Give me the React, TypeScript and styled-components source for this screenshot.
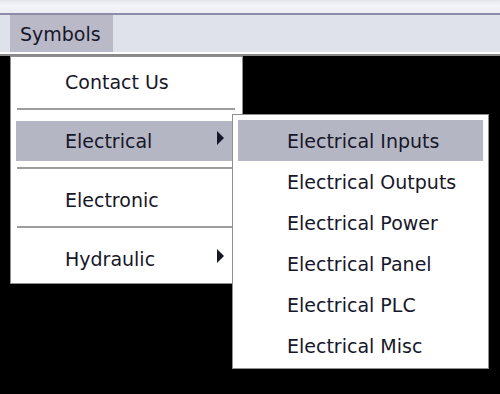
import React from 'react';
import styled, { createGlobalStyle } from 'styled-components';

const colors = {
  black: '#000000',
  white: '#ffffff',
  bar: '#dfe2ea',
  barLine: '#8c8ca6',
  hover: '#b5b6c3',
  border: '#8f8f8f',
  text: '#17172a',
  sep: '#9d9d9d',
};

const GlobalStyle = createGlobalStyle`
  html, body {
    margin: 0;
    padding: 0;
    background: ${colors.black};
  }
  body {
    width: 500px;
    height: 394px;
    overflow: hidden;
    font-family: "DejaVu Sans", "Liberation Sans", sans-serif;
  }
`;

type MenuEntry = { label: string; sub?: boolean; active?: boolean } | 'sep';

const mainItems: MenuEntry[] = [
  { label: 'Contact Us' },
  'sep',
  { label: 'Electrical', sub: true, active: true },
  'sep',
  { label: 'Electronic' },
  'sep',
  { label: 'Hydraulic', sub: true },
];

const subItems = [
  'Electrical Inputs',
  'Electrical Outputs',
  'Electrical Power',
  'Electrical Panel',
  'Electrical PLC',
  'Electrical Misc',
];

export default function App() {
  return (
    <>
      <GlobalStyle />
      <Screen>
        <TitleBar />
        <MenuBar>
          <BarItem $open>Symbols</BarItem>
        </MenuBar>
        <Workspace>
          <MainMenu>
            {mainItems.map((item, i) =>
              item === 'sep' ? (
                <Separator key={i} />
              ) : (
                <MenuItem key={i} $active={item.active}>
                  <span>{item.label}</span>
                  {item.sub && <Arrow />}
                </MenuItem>
              )
            )}
          </MainMenu>
          <SubMenu>
            {subItems.map((label, i) => (
              <SubItem key={label} $active={i === 0}>
                {label}
              </SubItem>
            ))}
          </SubMenu>
        </Workspace>
      </Screen>
    </>
  );
}

const Screen = styled.div`
  width: 500px;
  height: 394px;
  display: flex;
  flex-direction: column;
  background: ${colors.black};
`;

const TitleBar = styled.div`
  height: 13px;
  background: linear-gradient(#e4e5ea, #f3f4f7 40%, #eceef3);
  border-bottom: 2px solid ${colors.barLine};
`;

const MenuBar = styled.div`
  height: 37px;
  display: flex;
  padding-left: 10px;
  background: ${colors.bar};
  border-bottom: 2px solid ${colors.white};
  box-shadow: 0 2px 0 #8a8a8a;
`;

const BarItem = styled.div<{ $open?: boolean }>`
  display: flex;
  align-items: center;
  padding: 0 12px 0 10px;
  font-size: 19px;
  color: ${colors.text};
  background: ${(p) => (p.$open ? '#b9b9c8' : 'transparent')};
`;

const Workspace = styled.div`
  position: relative;
  flex: 1;
`;

const MainMenu = styled.div`
  position: absolute;
  left: 10px;
  top: 2px;
  width: 231px;
  display: flex;
  flex-direction: column;
  padding: 5px 0 4px;
  background: ${colors.white};
  border: 1px solid ${colors.border};
`;

const MenuItem = styled.div<{ $active?: boolean }>`
  height: 40px;
  margin: 0 5px;
  padding: 0 13px 0 49px;
  display: flex;
  align-items: center;
  font-size: 19px;
  color: ${colors.text};
  background: ${(p) => (p.$active ? colors.hover : 'transparent')};
`;

const Arrow = styled.i`
  margin: 0 0 6px auto;
  width: 0;
  height: 0;
  border-left: 7px solid ${colors.text};
  border-top: 7px solid transparent;
  border-bottom: 7px solid transparent;
`;

const Separator = styled.div`
  height: 19px;
  margin: 0 7px 0 6px;
  display: flex;
  flex-direction: column;
  padding-top: 6px;
  box-sizing: border-box;

  &::before {
    content: '';
    height: 2px;
    background: ${colors.sep};
  }
`;

const SubMenu = styled.div`
  position: absolute;
  left: 232px;
  top: 60px;
  width: 255px;
  display: flex;
  flex-direction: column;
  padding: 5px 0 2px;
  background: ${colors.white};
  border: 1px solid ${colors.border};
`;

const SubItem = styled.div<{ $active?: boolean }>`
  height: 41px;
  margin: 0 5px;
  padding-left: 49px;
  display: flex;
  align-items: center;
  font-size: 19px;
  color: ${colors.text};
  background: ${(p) => (p.$active ? colors.hover : 'transparent')};
`;
